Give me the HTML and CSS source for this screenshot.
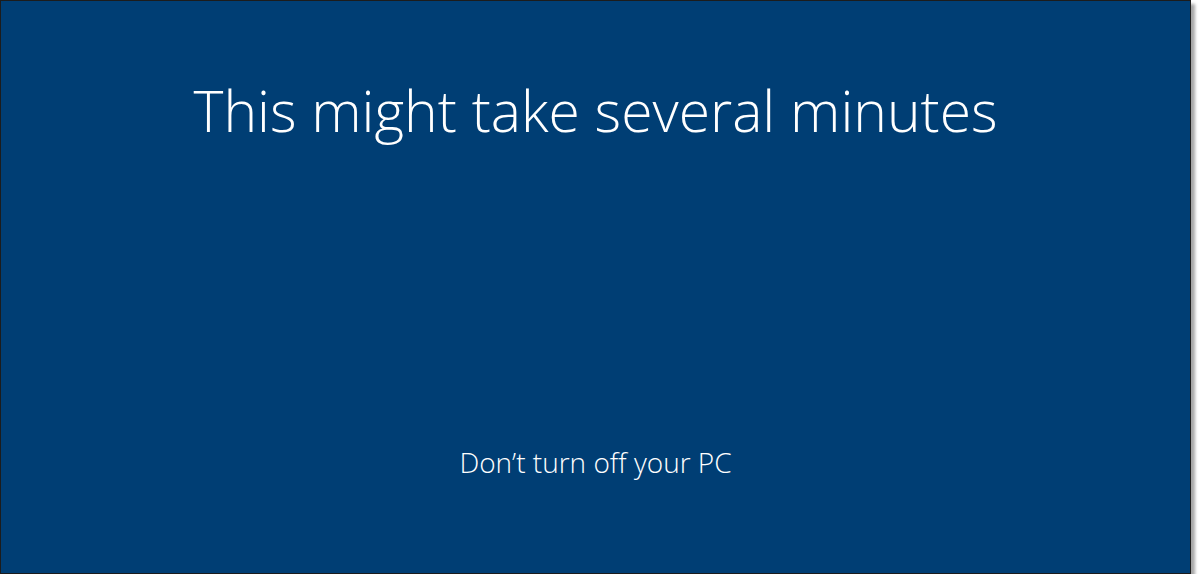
FILE: index.html
```html
<!DOCTYPE html>
<html lang="en">
<head>
  <meta charset="UTF-8" />
  <title>Windows Update</title>
  <link rel="stylesheet" href="styles.css">
</head>
<body>
  <div class="screen">
    <h1 class="title">This might take several minutes</h1>
    <p class="note">Don’t turn off your PC</p>
  </div>
</body>
</html>
```

FILE: styles.css
```css
body {
  margin: 0;
  background: #ffffff;
  font-family: "Open Sans", "Noto Sans", sans-serif;
}
.screen {
  box-sizing: border-box;
  width: 1191px;
  height: 574px;
  background: #003e74;
  border: 1px solid #1c1c1c;
  box-shadow: 4px 4px 3px rgba(0, 0, 0, 0.35);
  display: flex;
  flex-direction: column;
  align-items: center;
  color: #ffffff;
}
.title {
  margin: 69px 0 0;
  font-size: 57px;
  font-weight: 300;
  line-height: 80px;
}
.note {
  margin: auto 0 94px;
  font-size: 28px;
  font-weight: 300;
  line-height: 34px;
}
```
